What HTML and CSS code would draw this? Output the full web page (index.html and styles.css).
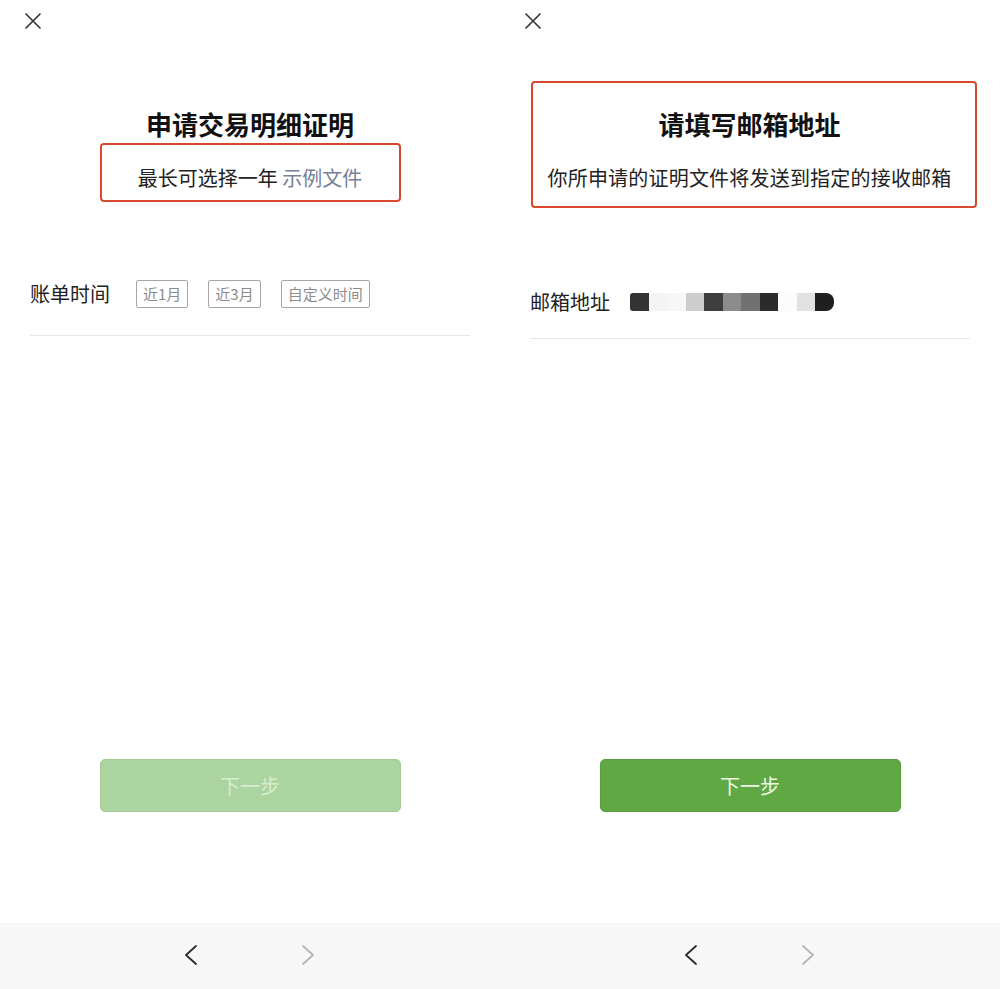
FILE: index.html
```html
<!DOCTYPE html>
<html lang="zh-CN">
<head>
  <meta charset="UTF-8">
  <meta name="viewport" content="width=device-width, initial-scale=1.0">
  <title>申请交易明细证明</title>
  <link rel="stylesheet" href="styles.css">
</head>
<body>
  <div class="screens">
    <!-- Step 1: choose period -->
    <section class="panel">
      <div class="topbar">
        <svg class="close" width="18" height="18" viewBox="0 0 18 18"><path d="M1.5 1.5 L16.5 16.5 M16.5 1.5 L1.5 16.5" /></svg>
      </div>
      <div class="intro">
        <h1 class="title">申请交易明细证明</h1>
        <div class="note-box">
          <p class="note">最长可选择一年 <span class="link">示例文件</span></p>
        </div>
      </div>
      <div class="field field-period">
        <span class="label">账单时间</span>
        <div class="tags">
          <span class="tag">近1月</span>
          <span class="tag">近3月</span>
          <span class="tag">自定义时间</span>
        </div>
      </div>
      <button class="btn btn-disabled">下一步</button>
    </section>

    <!-- Step 2: email -->
    <section class="panel">
      <div class="topbar">
        <svg class="close" width="18" height="18" viewBox="0 0 18 18"><path d="M1.5 1.5 L16.5 16.5 M16.5 1.5 L1.5 16.5" /></svg>
      </div>
      <div class="intro-box">
        <h1 class="title">请填写邮箱地址</h1>
        <p class="note note-wide">你所申请的证明文件将发送到指定的接收邮箱</p>
      </div>
      <div class="field field-email">
        <span class="label">邮箱地址</span>
        <div class="mosaic">
          <span></span><span></span><span></span><span></span><span></span><span></span>
          <span></span><span></span><span></span><span></span><span></span>
        </div>
      </div>
      <button class="btn btn-primary">下一步</button>
    </section>
  </div>

  <div class="toolbar">
    <div class="nav">
      <svg class="chev back" width="14" height="22" viewBox="0 0 14 22"><path d="M12 2 L2 11 L12 20" /></svg>
      <svg class="chev fwd" width="14" height="22" viewBox="0 0 14 22"><path d="M2 2 L12 11 L2 20" /></svg>
    </div>
    <div class="nav">
      <svg class="chev back" width="14" height="22" viewBox="0 0 14 22"><path d="M12 2 L2 11 L12 20" /></svg>
      <svg class="chev fwd" width="14" height="22" viewBox="0 0 14 22"><path d="M2 2 L12 11 L2 20" /></svg>
    </div>
  </div>
</body>
</html>
```

FILE: styles.css
```css
* {
  margin: 0;
  padding: 0;
  box-sizing: border-box;
}

body {
  background-color: #fff;
  font-family: "Noto Sans CJK SC", "Noto Sans", sans-serif;
  color: #1a1a1a;
  width: 1000px;
  height: 989px;
  overflow: hidden;
}

.screens {
  display: flex;
  height: 923px;
}

.panel {
  width: 500px;
  height: 100%;
  display: flex;
  flex-direction: column;
}

.topbar {
  height: 42px;
  padding-left: 24px;
  display: flex;
  align-items: center;
}

.close path {
  fill: none;
  stroke: #333;
  stroke-width: 1.6;
}

.title {
  font-size: 26px;
  line-height: 34px;
  font-weight: 700;
  text-align: center;
  color: #111;
}

.intro {
  margin-top: 65px;
  display: flex;
  flex-direction: column;
  align-items: center;
}

.note-box {
  margin-top: 2px;
  width: 301px;
  border: 2px solid #d8492c;
  border-radius: 4px;
  padding: 20px 0 9px;
  text-align: center;
}

.note {
  font-size: 20px;
  line-height: 26px;
  color: #222;
  text-align: center;
}

.link {
  color: #768197;
}

.intro-box {
  margin: 39px 0 0 31px;
  width: 446px;
  height: 127px;
  border: 2px solid #d8492c;
  border-radius: 4px;
  padding: 24px 9px 0 0;
}

.note-wide {
  margin-top: 24px;
  letter-spacing: 0.2px;
}

.field {
  margin: 0 30px;
  display: flex;
  align-items: center;
  border-bottom: 1px solid #e8e8e8;
  box-sizing: content-box;
  height: 28px;
}

.field-period {
  margin-top: 78px;
  padding-bottom: 27px;
}

.field-email {
  margin-top: 80px;
  padding-bottom: 22px;
}

.label {
  font-size: 20px;
  line-height: 28px;
  color: #222;
}

.tags {
  display: flex;
  gap: 20px;
  margin-left: 26px;
}

.tag {
  height: 28px;
  padding: 0 6px;
  border: 1.5px solid #a6a6a6;
  border-radius: 2px;
  font-size: 15px;
  line-height: 25px;
  color: #8c8c8c;
}

.mosaic {
  display: flex;
  margin-left: 20px;
  height: 18px;
}

.mosaic span {
  width: 18.5px;
  height: 18px;
}

.mosaic span:nth-child(1) { background: #333; border-radius: 3px 0 0 3px; }
.mosaic span:nth-child(2) { background: #f4f4f4; }
.mosaic span:nth-child(3) { background: #f7f7f7; }
.mosaic span:nth-child(4) { background: #cdcdcd; }
.mosaic span:nth-child(5) { background: #3d3d3d; }
.mosaic span:nth-child(6) { background: #8c8c8c; }
.mosaic span:nth-child(7) { background: #717171; }
.mosaic span:nth-child(8) { background: #2b2b2b; }
.mosaic span:nth-child(9) { background: #fcfcfc; }
.mosaic span:nth-child(10) { background: #e2e2e2; }
.mosaic span:nth-child(11) { background: #1f1f1f; border-radius: 0 8px 8px 0; }

.btn {
  margin: auto auto 111px;
  width: 301px;
  height: 53px;
  border-radius: 5px;
  font-family: inherit;
  font-size: 20px;
  cursor: pointer;
}

.btn-disabled {
  background-color: #acd4a0;
  border: 1px solid #a2cb95;
  color: #d6edcf;
}

.btn-primary {
  background-color: #5fa844;
  border: 1px solid #58a03e;
  color: #eef8e8;
}

.toolbar {
  height: 66px;
  background-color: #f7f7f7;
  display: flex;
}

.nav {
  width: 500px;
  display: flex;
  justify-content: center;
  align-items: center;
  gap: 103px;
  padding: 0 1px 3px 0;
}

.chev path {
  fill: none;
  stroke-width: 1.8;
  stroke-linecap: round;
  stroke-linejoin: round;
}

.back path {
  stroke: #2a2a2a;
}

.fwd path {
  stroke: #b5b5b5;
}
```
